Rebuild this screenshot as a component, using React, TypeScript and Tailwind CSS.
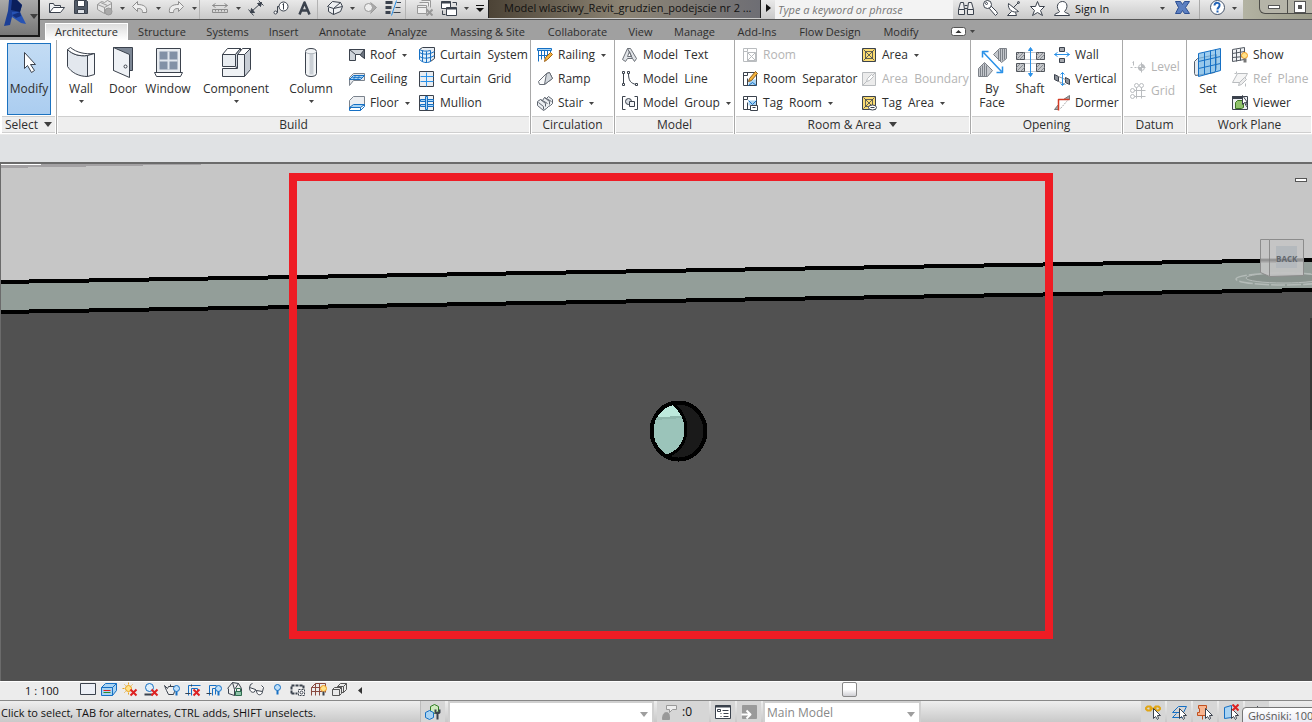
import type { ReactNode } from 'react';
import clsx from 'clsx';

const INK = '#3b424d';
const BLUE = '#1670c4';
const SKY = '#a9d3f2';
const GREY = '#b9bcbf';

type IconProps = { children: ReactNode; big?: boolean; color?: string };

function Icon({ children, big, color = INK }: IconProps) {
    return (
        <svg
            viewBox={big ? '-0.5 -0.5 32 32' : '-0.5 -0.5 16 16'}
            className={big ? 'size-8 shrink-0' : 'size-4 shrink-0'}
            fill="none"
            stroke={color}
            strokeWidth="1"
            strokeLinejoin="round"
            aria-hidden="true"
        >
            {children}
        </svg>
    );
}

function Caret({ wide }: { wide?: boolean }) {
    return wide ? (
        <svg viewBox="0 0 8 5" className="h-[5px] w-2 shrink-0" aria-hidden="true"><path d="M0 0h8L4 5z" fill="#3f3f3f" /></svg>
    ) : (
        <svg viewBox="0 0 5 3" className="h-[3px] w-[5px] shrink-0" aria-hidden="true"><path d="M0 0h5L2.500 3z" fill="#444" /></svg>
    );
}

/* Ribbon icons, 32px */
const big = {
    modify: <Icon big><path d="M11 6v16l3-3 4 7 3-2-4-6h5z" fill="#fff" /></Icon>,
    wall: <Icon big><path d="M2 3c5 5 12 7 20 6v21c-9 0-16-4-20-10z" fill="#e3e8ee" /><path d="M2 3l3-2c6 5 14 7 24 6l-7 2C14 10 7 8 2 3z" fill="#fff" /><path d="M22 9l7-2v21l-7 2z" fill="#f3f5f8" /></Icon>,
    door: <Icon big><path d="M6 1h19v23H6z" fill="#7d8795" /><path d="M6 1l16 7v23L6 24z" fill="#eef1f5" /><circle cx="18" cy="20" r="1.500" fill="#fff" /></Icon>,
    window: <Icon big><path d="M4 2h24v24H4z" fill="#e8ecf0" /><path d="M7 5h18v18H7z" fill="#8291a6" stroke="none" /><path d="M16 5v18M7 14h18" stroke="#dfe5ec" strokeWidth="2" /><path d="M2 26h28l-2 4H4z" fill="#fff" /></Icon>,
    component: <Icon big><path d="M2 8l5-6h13l-5 6z" fill="#fff" /><path d="M15 8l5-6v14l-5 6" fill="#d3d9e0" /><path d="M2 8h13v12H2z" fill="#e9edf1" /><path d="M17 8l5-6h8l-6 6z" fill="#fff" /><path d="M24 8l6-6v21l-6 7z" fill="#c7cdd5" /><path d="M17 8h7v22H2v-8h15z" fill="#eff2f5" /></Icon>,
    column: <Icon big><path d="M10 5c0-4 11-4 11 0v22c0 4-11 4-11 0z" fill="#f1f3f5" /><path d="M14 7h4v21h-4z" fill="#cbd0d6" stroke="none" /><path d="M10 5c0 3 11 3 11 0" stroke="#b0b6bd" /></Icon>,
    byFace: <Icon big color="#7c8188"><path d="M17 8l6-6h7v10l-5 4zM2 30v-8l6-6 8 8-5 6z" fill="#c5c8cd" /><path d="M22 4v10M24 2v13M26 2v12M28 2v11M4 21v9M6 19v11M8 17v13M10 19v11" /><path d="M7 6l18 19M6 11V5h6M20 26h6v-6" stroke="#2a91e8" strokeWidth="1.500" /></Icon>,
    shaft: <Icon big color="#8a8d92"><path d="M10 6h12v7H10zM10 17h12v8H10z" fill="#fff" stroke="#c5c8cc" /><path d="M2 6h8v7H2zM22 6h8v7h-8zM2 17h8v8H2zM22 17h8v8h-8z" fill="#c4c7cb" stroke="#50555c" /><path d="M3 12l6-6M5 13l5-5M2 9l3-3M23 12l6-6M25 13l5-5M22 9l3-3M3 24l6-6M6 25l4-4M2 21l4-4M23 24l6-6M26 25l4-4M22 21l4-4" /><path d="M16 2v27M14 4l2-3 2 3zM14 27l2 3 2-3z" stroke="#2a91e8" fill="#2a91e8" /></Icon>,
    set: <Icon big><path d="M2 15l3-3 19-4v14l-2 4-19 3-1-2z" fill="#e4eaf0" stroke="#56616e" /><path d="M6 7l22-5v22L6 30z" fill="#7fbce8" fillOpacity="0.75" stroke={BLUE} /><path d="M12 6v22M18 4v23M23 3v22M6 15l22-5M6 22l22-5" stroke={BLUE} /></Icon>,
};

const roomPlan = <path d="M1 1h13v13H1zM5 1v3M5 7v7M1 4h4" />;
const pencil = <path d="M6 10l1-3 6-7 2 2-6 7z" fill="#f6b43c" stroke="#8a5a1c" />;
const goldArea = <><path d="M1 1h13v13H1z" fill="#fbdc73" /><path d="M2 2l11 11M13 2L2 13M4 4h7v7H4z" strokeWidth="0.800" /></>;

/* Ribbon icons, 16px */
const small = {
    roof: <Icon><path d="M0 2h15v9l-4-4H6v6H0z" fill="#cfd4da" /><path d="M0 2l6 5M15 2l-4 5v1l4 3V2z" fill="#6d7580" /></Icon>,
    ceiling: <Icon color="#7a828c"><path d="M0 6l4-4h11v7H4l-4 5z" fill="#e4e7eb" /><path d="M0 8l4-4h11l-4 4z" fill={SKY} stroke={BLUE} /><path d="M3 6h9M6 4L4 8M10 4L8 8" stroke={BLUE} strokeWidth="0.800" /></Icon>,
    floor: <Icon color="#7a828c"><path d="M4 1h11v9H4l-4 4V5z" fill="#eceef1" /><path d="M0 12l4-3h11l-4 3z" fill={SKY} stroke={BLUE} /><path d="M0 12v3h11l4-4V9M11 12v3" stroke={BLUE} /></Icon>,
    curtainSystem: <Icon><path d="M0 2l3-2h12v11l-4 3" fill="#e7edf3" /><path d="M0 2c3 2 7 2 11 1v11c-4 2-8 1-11-2z" fill="#e4f1fb" stroke={BLUE} /><path d="M3 3v11M7 4v11M0 5c3 2 7 2 11 1M0 9c3 2 7 2 11 1M11 6l4-2M11 10l4-2" stroke={BLUE} /></Icon>,
    curtainGrid: <Icon><path d="M0 0h14v15H0z" fill="#e9edf1" /><path d="M7 1v14M1 5h13M1 10h13" stroke="#2a91e8" /></Icon>,
    mullion: <Icon><path d="M0 0h14v15H0z" fill="#eef2f5" /><path d="M6 1h2v13H6zM1 4h5v2H1zM8 4h6v2H8zM1 9h5v2H1zM8 9h6v2H8z" fill={SKY} stroke={BLUE} /></Icon>,
    railing: <Icon color={BLUE}><path d="M0 1h14v2H0z" fill={SKY} /><path d="M1 3v11M4 3v9M7 3v8M10 3v5M13 3v3M1 8h9" /><path d="M7 14l1-4 5-5 2 2-5 5z" fill="#f6b43c" stroke="#a0641a" /></Icon>,
    ramp: <Icon color="#666c75"><path d="M1 10L9 2l3-1 3 6-8 6H2z" fill="#fafbfc" /><path d="M9 2l3-1 3 6-8 6z" fill="#d3d8dd" /></Icon>,
    stair: <Icon color="#5d646e"><path d="M0 6l3-2 2 1 2-3 2 1 2-2 4 3v4l-2 2-2 1-2 2-3 2-6-5z" fill="#eceff2" /><path d="M3 4l5 4v3M5 5l5 3M7 2l5 4v3M9 3l5 3M1 7l5 4v3" /></Icon>,
    modelText: <Icon color="#6b7077"><path d="M0 12L5 1h3l6 10-2 3-2-3H5l-2 3z" fill="#e1e4e8" /><path d="M7 4L5 9h4zM5 1l5 10" fill="#fff" /></Icon>,
    modelLine: <Icon><path d="M1 2v11M6 2c0 7 2 10 8 11" /><path d="M0 0h2v2H0zM0 12h2v2H0zM5 0h2v2H5zM13 12h2v2h-2z" fill="#fff" /></Icon>,
    modelGroup: <Icon><path d="M3 1H0v13h3M12 1h3v13h-3" /><circle cx="6" cy="6" r="3" fill="#d9dde2" /><path d="M7 6h5v5H7z" fill="#f4f5f7" /></Icon>,
    room: <Icon color={GREY}>{roomPlan}<path d="M5 5h8v8H5zM5 5l8 8M13 5l-8 8" /></Icon>,
    roomSeparator: <Icon><path d="M6 8h8v6H6z" fill={SKY} stroke="none" />{roomPlan}<path d="M6 14l4-3 4 3" stroke={BLUE} />{pencil}</Icon>,
    tagRoom: <Icon><path d="M6 5h8v5H6z" fill={SKY} stroke="none" />{roomPlan}<path d="M6 5l4 4 4-4" stroke={BLUE} /><path d="M8 10h7v5H8z" fill="#fff" /><path d="M10 12h3" /></Icon>,
    area: <Icon>{goldArea}</Icon>,
    areaBoundary: <Icon color={GREY}><path d="M1 1h13v13H1zM1 14L14 1" fill="#ececec" /><path d="M5 10l1-3 4-4 2 2-4 4z" fill="#fff" /></Icon>,
    tagArea: <Icon>{goldArea}<ellipse cx="11" cy="12" rx="4" ry="2.500" fill="#fff" /><path d="M9 12h4" /></Icon>,
    openWall: <Icon><path d="M5 0h5v4H5zM5 11h5v4H5z" fill="#a4a8ae" /><path d="M0 7h15M3 5L0 7l3 2M12 5l3 2-3 2" stroke="#2a91e8" /></Icon>,
    openVertical: <Icon><path d="M0 3l4 2v5L0 8zM11 6l4 2v5l-4-2z" fill="#8d929a" /><path d="M4 5l7 3M4 10l7 3" stroke="#999" /><path d="M8 1v13M6 3l2-2 2 2M6 12l2 2 2-2" stroke="#2a91e8" /></Icon>,
    dormer: <Icon><path d="M0 14l4-5v5zM9 4l6-4v4z" fill="#a4a8ae" stroke="#777" /><path d="M4 15V4h11" stroke="#d33b24" strokeWidth="1.500" /><path d="M6 13l7-8" stroke="#aaa" strokeDasharray="2 1" /></Icon>,
    level: <Icon color={GREY}><path d="M2 3l1-1v4M0 8h2M4 8h2" /><circle cx="11" cy="8" r="3" /><path d="M7 8h8M11 3v10" /><path d="M11 8V5a3 3 0 0 1 3 3zM11 8v3a3 3 0 0 1-3-3z" fill={GREY} /></Icon>,
    grid: <Icon color={GREY}><path d="M6 4v11M11 4v11M4 7h11M4 13h11" /><circle cx="6" cy="2" r="2" /><circle cx="11" cy="2" r="2" /><circle cx="2" cy="7" r="2" /><circle cx="2" cy="13" r="2" /></Icon>,
    show: <Icon color="#535962"><path d="M0 2l12-2v12L0 14zM4 2v12M8 1v12M0 6l12-2M0 10l12-1" fill="#f1f3f5" /><circle cx="12" cy="8" r="3" fill="#ffe28a" stroke="#f29a1f" /><path d="M11 11h3v4h-3z" fill="#777" stroke="none" /></Icon>,
    refPlane: <Icon color={GREY}><path d="M5 2h10l-5 9H0z" fill="#f5f5f5" /><path d="M2 2h2M4 0v2M13 12v3" /><path d="M6 14l1-3 5-5 2 2-5 5z" fill="#ececec" /></Icon>,
    viewer: <Icon><path d="M0 1h15v13H0z" fill="#eef1f4" /><path d="M0 1h10v2H0z" fill={INK} /><path d="M3 7l2-2h6v7l-2 1H3z" fill="#8fc26b" stroke="#3c7424" /><path d="M10 0v9l2-2 2 4 1-1-2-3h2z" fill="#fff" /></Icon>,
};

const help = <Icon color="#44536b"><circle cx="8" cy="7" r="7" fill="#fff" /><path d="M5 5c0-4 6-3 5 0 0 2-2 2-2 4M8 10v2" stroke="#2263b8" strokeWidth="2" /></Icon>;

/* Quick access toolbar; each entry keeps its own slot width */
const quick: { name: string; w: string; node: ReactNode }[] = [
    { name: 'Open', w: 'w-6', node: <Icon><path d="M0 12V3h4l1 2h6v3" fill="#f0f2f4" /><path d="M0 12l4-5h11l-4 5z" fill="#fff" /></Icon> },
    { name: 'Save', w: 'w-6', node: <Icon><path d="M1 0h12l1 1v12H1z" fill="#525b68" /><path d="M4 0h7v6H4z" fill="#fff" /><path d="M4 9h7v4H4z" fill="#dfe3e8" /></Icon> },
    { name: 'Synchronize', w: 'w-6', node: <Icon color="#999"><path d="M0 4l4-3 3 1 3-2 4 2v7l-7 4-7-4zM0 4l7 3 7-4M7 7v6M3 2l7 3" fill="#e6e6e6" /><circle cx="11" cy="11" r="3.500" fill="#aaa" /></Icon> },
    { name: 'Synchronize options', w: 'w-2.5', node: <Caret /> },
    { name: 'Undo', w: 'w-[26px]', node: <Icon color="#8d8d8d"><path d="M0 6l5-5v3c6 0 10 2 9 8h-4c0-3-1-4-5-4v3z" fill="#eee" /></Icon> },
    { name: 'Undo history', w: 'w-2.5', node: <Caret /> },
    { name: 'Redo', w: 'w-[26px]', node: <Icon color="#8d8d8d"><path d="M15 6l-5-5v3C4 4 0 6 1 12h4c0-3 1-4 5-4v3z" fill="#eee" /></Icon> },
    { name: 'Redo history', w: 'w-2.5', node: <Caret /> },
    { name: '', w: 'w-2', node: null },
    { name: 'Measure', w: 'w-[26px]', node: <Icon color="#8d8d8d"><path d="M0 5h15M3 3L0 5l3 2M12 3l3 2-3 2M0 9h15v3H0zM3 9v2M6 9v2M9 9v2M12 9v2" /></Icon> },
    { name: 'Measure options', w: 'w-2.5', node: <Caret /> },
    { name: 'Aligned Dimension', w: 'w-[26px]', node: <Icon><path d="M2 12L13 2M0 9l5 6M10 0l5 5" /><path d="M2 12l1-4 3 4zM13 2L9 3l3 3z" fill={INK} /></Icon> },
    { name: 'Tag by Category', w: 'w-6', node: <Icon><path d="M1 12h3V6h2" /><circle cx="10" cy="6" r="4.500" fill="#fff" /><path d="M9 4l1-1v6" /><circle cx="2" cy="12" r="1.500" fill="#fff" /></Icon> },
    { name: 'Text', w: 'w-6', node: <Icon><path d="M2 14L7 2l5 12M4 10h6" strokeWidth="2.500" /></Icon> },
    { name: '', w: 'w-1.5', node: null },
    { name: 'Default 3D View', w: 'w-6', node: <Icon><path d="M0 6l5-5 8 1 2 4-2 5-7 3-5-3V7" fill="#eef0f2" /><path d="M0 6l6 2 9-2M6 8v6M13 2l-7 6" /></Icon> },
    { name: '3D View options', w: 'w-2.5', node: <Caret /> },
    { name: 'Section', w: 'w-6', node: <Icon color="#999"><path d="M9 2l6 5-6 6" fill="#aaa" /><circle cx="7" cy="7" r="4" fill="#eee" /></Icon> },
    { name: 'Thin Lines', w: 'w-6', node: <Icon><path d="M0 2h7M0 7h6M0 12h5" strokeWidth="3" /><path d="M11 2h5M10 7h5M8 12h7" /><path d="M11 0L6 15" stroke="#2a91e8" /></Icon> },
    { name: '', w: 'w-2', node: null },
    { name: 'Close Hidden Windows', w: 'w-6', node: <Icon color="#999"><path d="M4 0h9v7M2 2h9v4M0 5h9v8H0zM0 7h9" fill="#eee" /><path d="M9 9l6 6M15 9l-6 6" strokeWidth="2" /></Icon> },
    { name: 'Switch Windows', w: 'w-6', node: <Icon><path d="M0 1h9v7H0zM5 7h10v8H5z" fill="#fff" /><path d="M5 8h10M0 2h9" strokeWidth="2" /><path d="M11 2h4v3M1 10v4h3" /></Icon> },
    { name: 'Switch Windows options', w: 'w-2.5', node: <Caret /> },
    { name: 'Customize Quick Access Toolbar', w: 'w-[17px]', node: <svg viewBox="0 0 8 7" className="h-[7px] w-2"><path d="M0 0h8v1H0zM0 3h8L4 7z" fill="#111" /></svg> },
];

const infoTools: { name: string; node: ReactNode }[] = [
    { name: 'Search', node: <Icon><path d="M0 9l2-7h3l1 7v5H0zM15 9l-2-7h-3L9 9v5h6zM6 5h3M0 9h6M9 9h6M6 8h3" fill="#eee" /></Icon> },
    { name: 'Subscription Center', node: <Icon><path d="M6 7l7 8 2-2-1-2-6-6" fill="#fff" /><circle cx="5" cy="4" r="4" fill="#fff" /><circle cx="4" cy="3" r="1" /></Icon> },
    { name: 'Communication Center', node: <Icon><path d="M2 3c-1 6 4 10 10 8zM7 7l5-5M5 11l-4 4h9l-1-3" fill="#fff" /><circle cx="12" cy="2" r="1" /></Icon> },
    { name: 'Favorites', node: <Icon><path d="M7 1l2 5h5l-4 4 2 5-5-3-5 3 2-5-4-4h5z" fill="#fff" /></Icon> },
];

const tabs = [
    { label: 'Structure', w: 'w-[68px]' },
    { label: 'Systems', w: 'w-[63px]' },
    { label: 'Insert', w: 'w-[49px]' },
    { label: 'Annotate', w: 'w-[69px]' },
    { label: 'Analyze', w: 'w-[61px]' },
    { label: 'Massing & Site', w: 'w-[99px]' },
    { label: 'Collaborate', w: 'w-[81px]' },
    { label: 'View', w: 'w-[45px]' },
    { label: 'Manage', w: 'w-[63px]' },
    { label: 'Add-Ins', w: 'w-[62px]' },
    { label: 'Flow Design', w: 'w-[84px]' },
    { label: 'Modify', w: 'w-[58px]' },
];

function BigTool({ icon, label, w, caret }: { icon: ReactNode; label: string; w: string; caret?: boolean }) {
    return (
        <button className={clsx('flex shrink-0 flex-col items-center pt-[3px] text-xs leading-[14px]', w)}>
            {icon}
            <span className="mt-1">{label}</span>
            {caret && <span className="pt-1"><Caret /></span>}
        </button>
    );
}

function Tool({ icon, label, caret, off }: { icon: ReactNode; label: string; caret?: boolean; off?: boolean }) {
    return (
        <button disabled={off} className={clsx('flex h-6 items-center whitespace-pre text-xs', off && 'text-[#b4b4b4]')}>
            {icon}
            <span className="ml-[5px]">{label}</span>
            {caret && <span className="ml-1.5"><Caret /></span>}
        </button>
    );
}

function Panel({ title, w, caret, children }: { title: string; w: string; caret?: boolean; children: ReactNode }) {
    return (
        <section className={clsx('flex flex-col border-r border-[#a9a9a9]', w)}>
            <div className="flex h-[76px] pt-[3px]">{children}</div>
            <h2 className="mx-px flex h-[17px] items-center justify-center gap-2 border-y border-[#cfcfcf] bg-[#eee] text-xs">
                {title}
                {caret && <Caret wide />}
            </h2>
        </section>
    );
}

function Header() {
    return (
        <header className="flex h-10 items-start bg-[#a0a0a0]">
            <button aria-label="Application menu" className="flex h-[37px] w-10 shrink-0 items-start justify-between border-r-2 border-b-2 border-[#191919] bg-linear-to-b from-[#a9a9a9] to-[#777] pl-1">
                <svg viewBox="0 0 24 28" className="h-7 w-6" aria-hidden="true">
                    <path d="M5 0h8l5 5-2 7-8 5-2 8-6 1 4-15z" fill="#1c3f96" />
                    <path d="M13 0l5 5-2 7-9-2 1-10z" fill="#0a1f5c" />
                    <path d="M8 12l8 0 6 12-5-1-9-6z" fill="#2753b4" />
                    <path d="M8 15l8-3 1 4-5 2z" fill="#14307c" />
                </svg>
                <span className="pt-3.5"><Caret wide /></span>
            </button>
            <div className="min-w-0 flex-1">
                <div className="flex h-5 items-start overflow-hidden border-b border-[#555] bg-linear-to-b from-[#e9e9e9] to-[#c9c9c9] pl-[5px]">
                    {quick.map((q, i) =>
                        q.node ? (
                            <button key={i} aria-label={q.name} className={clsx('flex h-4 shrink-0 items-center justify-center', q.w)}>{q.node}</button>
                        ) : (
                            <span key={i} className={clsx('h-5 shrink-0 border-l border-[#b3b3b3]', q.w)} />
                        ),
                    )}
                    <h1 className="h-[18px] w-[273px] shrink-0 overflow-hidden whitespace-nowrap border-x border-[#222] bg-linear-to-r from-[#4c4336] via-[#8d8575] to-[#6e6e74] pl-[15px] text-[11px] leading-4 text-[#111]">
                        Model wlasciwy_Revit_grudzien_podejscie nr 2 ...
                    </h1>
                    <button aria-label="Expand search" className="flex h-4 w-3.5 shrink-0 items-center justify-center">
                        <svg viewBox="0 0 5 8" className="h-2 w-[5px]"><path d="M0 0v8l5-4z" fill="#111" /></svg>
                    </button>
                    <input aria-label="Search" placeholder="Type a keyword or phrase" className="h-[19px] w-[178px] shrink-0 bg-[#f3f3f3] px-[3px] text-[11px] italic placeholder:text-[#777]" />
                    <div className="flex gap-2 pl-[5px]">
                        {infoTools.map((t) => <button key={t.name} aria-label={t.name} className="h-4">{t.node}</button>)}
                    </div>
                    <button className="ml-2 flex h-[18px] items-center gap-[5px] text-[11px] text-[#111]">
                        <Icon><path d="M0 14c0-3 5-2 5-4C1 6 3 0 8 0s6 6 2 10c0 2 5 1 5 4z" fill="#fff" /></Icon>
                        Sign In
                    </button>
                    <div className="ml-auto flex shrink-0 items-start">
                        <button aria-label="Account options" className="flex h-4 w-[14px] items-center"><Caret /></button>
                        <button aria-label="Exchange Apps" className="h-4 w-[19px]">
                            <Icon color="#2d4f93"><path d="M1 1h5l2 3 2-3h5l-4 6 4 6h-5l-2-3-2 3H1l3-6z" fill="#5c7fc0" /></Icon>
                        </button>
                        <span className="ml-1.5 h-5 w-2.5 border-l border-[#aaa]" />
                        <button aria-label="Help" className="h-4">{help}</button>
                        <button aria-label="Help options" className="flex h-4 w-[18px] items-center justify-center"><Caret /></button>
                        <div className="flex h-[19px] w-[69px] justify-end bg-linear-to-r from-[#b3b3a3] to-[#9a9a88]">
                            <button aria-label="Minimize" className="flex h-3.5 w-[29px] items-center justify-center rounded-bl-md border border-t-0 border-[#4d4d49] bg-[#b5b4a8]">
                                <span className="h-1 w-3 border border-[#555] bg-white" />
                            </button>
                            <button aria-label="Restore" className="flex h-3.5 w-6 items-center justify-center border-b border-[#4d4d49] bg-[#b5b4a8]">
                                <span className="size-2.5 border-3 border-white bg-[#555] outline outline-[#555]" />
                            </button>
                        </div>
                    </div>
                </div>
                <nav className="flex h-5 items-end pl-[5px] text-[11px]">
                    <button className="h-[17px] w-[83px] shrink-0 border border-b-0 border-white bg-linear-to-b from-[#ddd] to-white leading-[14px]">Architecture</button>
                    {tabs.map((t) => (
                        <button key={t.label} className={clsx('h-[17px] shrink-0 whitespace-nowrap leading-[14px]', t.w)}>{t.label}</button>
                    ))}
                    <button aria-label="Minimize ribbon" className="ml-[21px] flex h-[17px] items-center gap-1">
                        <svg viewBox="0 0 15 9" className="h-[9px] w-[15px]"><rect x="0.500" y="0.500" width="14" height="8" rx="2" fill="#fff" stroke="#555" /><path d="M4.500 6h6l-3-3z" fill="#333" /></svg>
                        <Caret />
                    </button>
                </nav>
            </div>
        </header>
    );
}

function Ribbon() {
    return (
        <div className="flex h-[95px] overflow-hidden border-b border-[#e9e9e9] bg-white">
            <section className="w-[57px] shrink-0 border-r border-[#a9a9a9]">
                <div className="h-[76px] pt-[3px] pl-[7px]">
                    <button className="flex h-[72px] w-11 flex-col items-center border border-[#1b72c0] bg-linear-to-b from-[#c3dcf4] to-[#abcdf0] pt-0.5 text-xs leading-[14px]">
                        {big.modify}
                        <span className="mt-1">Modify</span>
                    </button>
                </div>
                <button className="ml-0.5 flex h-[17px] w-[53px] items-center justify-center gap-1.5 border-y border-[#cfcfcf] bg-[#eee] text-xs">
                    Select
                    <Caret wide />
                </button>
            </section>

            <Panel title="Build" w="w-[474px] shrink-0">
                <div className="w-px" />
                <BigTool icon={big.wall} label="Wall" w="w-[46px]" caret />
                <BigTool icon={big.door} label="Door" w="w-[38px]" />
                <BigTool icon={big.window} label="Window" w="w-[52px]" />
                <BigTool icon={big.component} label="Component" w="w-[84px]" caret />
                <BigTool icon={big.column} label="Column" w="w-[66px]" caret />
                <div className="w-[70px] pl-[5px]">
                    <Tool icon={small.roof} label="Roof" caret />
                    <Tool icon={small.ceiling} label="Ceiling" />
                    <Tool icon={small.floor} label="Floor" caret />
                </div>
                <div className="pl-[5px]">
                    <Tool icon={small.curtainSystem} label="Curtain  System" />
                    <Tool icon={small.curtainGrid} label="Curtain  Grid" />
                    <Tool icon={small.mullion} label="Mullion" />
                </div>
            </Panel>

            <Panel title="Circulation" w="w-[84px] shrink-0">
                <div className="pl-1.5">
                    <Tool icon={small.railing} label="Railing" caret />
                    <Tool icon={small.ramp} label="Ramp" />
                    <Tool icon={small.stair} label="Stair" caret />
                </div>
            </Panel>

            <Panel title="Model" w="w-[120px] shrink-0">
                <div className="pl-[7px]">
                    <Tool icon={small.modelText} label="Model  Text" />
                    <Tool icon={small.modelLine} label="Model  Line" />
                    <Tool icon={small.modelGroup} label="Model  Group" caret />
                </div>
            </Panel>

            <Panel title="Room & Area" w="w-[236px] shrink-0" caret>
                <div className="w-[126px] pl-[7px]">
                    <Tool icon={small.room} label="Room" off />
                    <Tool icon={small.roomSeparator} label="Room  Separator" />
                    <Tool icon={small.tagRoom} label="Tag  Room" caret />
                </div>
                <div>
                    <Tool icon={small.area} label="Area" caret />
                    <Tool icon={small.areaBoundary} label="Area  Boundary" off />
                    <Tool icon={small.tagArea} label="Tag  Area" caret />
                </div>
            </Panel>

            <Panel title="Opening" w="w-[152px] shrink-0">
                <div className="w-0.5" />
                <BigTool icon={big.byFace} label="By Face" w="w-[38px]" />
                <BigTool icon={big.shaft} label="Shaft" w="w-[38px]" />
                <div className="pl-[5px]">
                    <Tool icon={small.openWall} label="Wall" />
                    <Tool icon={small.openVertical} label="Vertical" />
                    <Tool icon={small.dormer} label="Dormer" />
                </div>
            </Panel>

            <Panel title="Datum" w="w-[64px] shrink-0">
                <div className="pt-3 pl-[7px]">
                    <Tool icon={small.level} label="Level" off />
                    <Tool icon={small.grid} label="Grid" off />
                </div>
            </Panel>

            <Panel title="Work Plane" w="min-w-[126px] flex-1">
                <BigTool icon={big.set} label="Set" w="w-[42px]" />
                <div className="pl-[3px]">
                    <Tool icon={small.show} label="Show" />
                    <Tool icon={small.refPlane} label="Ref  Plane" off />
                    <Tool icon={small.viewer} label="Viewer" />
                </div>
            </Panel>
        </div>
    );
}

function ModelView() {
    return (
        <main className="min-h-0 flex-1 border-t-2 border-l border-[#6b6b6b] bg-[#515151]">
            <svg viewBox="1 164 1311 517" preserveAspectRatio="xMidYMid slice" className="block size-full" role="img" aria-label="3D view of the model">
                <g shapeRendering="crispEdges">
                    <path d="M0 164h1312v96L0 282z" fill="#c6c6c6" />
                    <path d="M0 164h230L0 168z" fill="#a3a1a3" />
                    <path d="M0 164h41v1H0z" fill="#fff" />
                    <path d="M0 282l1312-22v30L0 312z" fill="#939e99" />
                    <path d="M0 312l1312-22v391H0z" fill="#515151" />
                    <path d="M0 282l1312-22M0 312l1312-22" stroke="#000" strokeWidth="4" />
                    <ellipse cx="678.500" cy="431" rx="27" ry="28.500" fill="#1a1a1a" />
                    <path d="M666 456c12-3 20-13 20-27 0-11-6-20-14-26-12 4-20 15-20 29 0 11 5 20 14 24z" fill="#9bc4ba" />
                    <path d="M656 417c3-7 9-12 16-14 6 4 10 8 12 14z" fill="#bde9dc" />
                    <path d="M656 417l27-1v2l-28 2z" fill="#8fb8ad" />
                    <path d="M666 456c12-3 20-13 20-27 0-11-6-20-14-26" fill="none" stroke="#000" strokeWidth="3" />
                    <ellipse cx="678.500" cy="431" rx="27" ry="28.500" fill="none" stroke="#000" strokeWidth="4" />
                    <path d="M1310 318h2v112h-2z" fill="#383838" />
                    <path d="M1295.500 178.500h11v3h-11z" fill="#fff" stroke="#555" />
                    <rect x="293" y="177" width="756" height="458" fill="none" stroke="#ee1c24" strokeWidth="8" />
                </g>
                {/* View cube and compass ring */}
                <ellipse cx="1284" cy="279" rx="48" ry="6" fill="none" stroke="#b4bbb8" strokeWidth="1.500" strokeDasharray="14 2" />
                <ellipse cx="1284" cy="278" rx="38" ry="5" fill="#7d8582" fillOpacity="0.500" stroke="#b5bbb9" />
                <path d="M1260.500 239.500h9v37l-9-4z" fill="#c4c4c4" fillOpacity="0.900" stroke="#8c8c8c" />
                <path d="M1269.500 239.500h34v36l-34 1z" fill="#c4c4c4" fillOpacity="0.900" stroke="#8c8c8c" />
                <path d="M1276 246h21v22h-21z" fill="#b4b9bd" />
                <path d="M1260 260h43" stroke="#777" strokeWidth="3" strokeOpacity="0.500" />
                <text x="1276" y="262" fontSize="8" fontWeight="700" fill="#62676e">BACK</text>
            </svg>
        </main>
    );
}

const redX = <path d="M8 7l6 6M14 7l-6 6" stroke="#d22" strokeWidth="2" />;
const bulb = <><circle cx="12" cy="6" r="3" fill="#bfe0fa" stroke={BLUE} /><path d="M12 9v4" stroke={BLUE} strokeWidth="2" /></>;

const viewTools: { name: string; node: ReactNode }[] = [
    { name: 'Detail Level', node: <Icon><path d="M0 1h15v11H0z" fill="#eceff5" /></Icon> },
    { name: 'Visual Style', node: <Icon color={BLUE}><path d="M0 5l4-4h11v7l-4 5H0zM0 5h11v8M11 5l4-4" fill={SKY} /><path d="M2 8h7" stroke="#d22" /><path d="M2 10h7" stroke="#2a8a2a" /></Icon> },
    { name: 'Sun Path', node: <Icon color="#e9a31b"><circle cx="6" cy="6" r="3" fill="#ffe28a" /><path d="M6 0v2M6 10v2M0 6h2M2 2l1 1M10 2L9 3M2 10l1-1" />{redX}</Icon> },
    { name: 'Shadows', node: <Icon color={BLUE}><path d="M1 12h8" stroke={INK} strokeWidth="2" /><circle cx="6" cy="5" r="4" fill="#e0f0fb" />{redX}</Icon> },
    { name: 'Rendering', node: <Icon><path d="M0 3l3 3 1-2h6v5l-1 3H4L2 8zM6 2v2" fill="#eee" />{bulb}</Icon> },
    { name: 'Crop View', node: <Icon><path d="M3 13V3h12M0 11h1M6 6h6v6M6 6v7" stroke={BLUE} /><path d="M0 11h5M6 2v2" />{redX}</Icon> },
    { name: 'Crop Region', node: <Icon><path d="M3 13V3h7M6 6h3v6M6 6v7" stroke={BLUE} /><path d="M0 11h5" />{bulb}</Icon> },
    { name: 'Locked 3D View', node: <Icon><path d="M0 6l5-6 6 1 3 5v3l-7 4-6-2V6M5 0l2 7v6M11 1L7 7" fill="#eee" /><path d="M8 9h6v4H8z" fill="#8fc2a9" stroke="#2f6d4e" /><path d="M9 9V6h4v3" stroke="#2f6d4e" /></Icon> },
    { name: 'Temporary Hide', node: <Icon><path d="M1 5c0 6 6 6 6 2M8 8c0 6 6 5 6 1M7 7l1 1M1 5l1-3 2-1M14 9l1-4-2-2M1 5l6 2M8 8l6 1" fill="#fff" /></Icon> },
    { name: 'Reveal Hidden', node: <Icon color={BLUE}><circle cx="8" cy="5" r="3" fill="#bfe0fa" /><path d="M8 8v4" strokeWidth="2" /></Icon> },
    { name: 'View Properties', node: <Icon><path d="M1 11V3h12v3M1 11h6" strokeWidth="2" strokeDasharray="3 1" /><path d="M8 7h6v6H8z" fill="#fff" strokeDasharray="2 1" /><circle cx="11" cy="10" r="1.500" /></Icon> },
    { name: 'Analytical Model', node: <Icon><path d="M0 5l4-4h10v9M0 5v8M4 1v12M8 1v12M0 5h10M0 9h11" stroke="#8a4a40" /><circle cx="12" cy="6" r="3" fill="#ffe28a" stroke="#f29a1f" /><path d="M12 9v4" strokeWidth="2" /></Icon> },
    { name: 'Displacement Sets', node: <Icon color="#555"><path d="M5 4l3-3h6v6l-3 3H5zM5 4h6v6M11 4l3-3" fill="#e9e9e9" /><path d="M0 7l2-2h7v6l-2 2H0zM0 7h7v6M7 7l2-2" fill="#e9e9e9" /></Icon> },
];

function ViewBar() {
    return (
        <div className="flex h-[19px] shrink-0 items-start border-t border-white bg-[#ececec] text-[11px]">
            <button className="h-[17px] w-[77px] pl-[25px] text-left leading-4 text-[#111]">1 : 100</button>
            {viewTools.map((t) => (
                <button key={t.name} aria-label={t.name} className="flex w-[21px] shrink-0 justify-center">{t.node}</button>
            ))}
            <button aria-label="Scroll left" className="flex h-4 w-5 items-center justify-center">
                <svg viewBox="0 0 4 7" className="h-[7px] w-1"><path d="M4 0v7L0 3.500z" fill="#333" /></svg>
            </button>
            <div className="flex h-4 flex-1 justify-center pl-4">
                <button aria-label="Scroll horizontally" className="size-[15px] rounded-xs border border-[#888] bg-linear-to-b from-white from-50% to-[#cfcfd4]" />
            </div>
        </div>
    );
}

const pointer = <path d="M8 4v10l2-2 2 3 1-1-1-3h3z" fill="#fff" />;

const selectTools: { name: string; node: ReactNode }[] = [
    { name: 'Select Links', node: <Icon><path d="M2 2h3l1 2-1 2H2L0 4zM10 2h3l2 2-2 2h-3L9 4zM4 4h7" stroke="#e0a516" strokeWidth="2" />{pointer}</Icon> },
    { name: 'Select Underlay Elements', node: <Icon><path d="M1 8l6-6h8M1 8h11l3-6M1 13l4-4M1 13h11" stroke={BLUE} />{pointer}</Icon> },
    { name: 'Select Pinned Elements', node: <Icon><path d="M1 1h8v3H8v4h2v3H0V8h2V4H1zM5 11v4" fill="#f8b590" stroke="#c2501f" />{pointer}</Icon> },
    { name: 'Select Elements by Face', node: <Icon><path d="M1 3l7-2v12l-7 1z" fill={SKY} stroke={BLUE} />{pointer}<path d="M9 0l6 6M15 0L9 6" stroke="#d22" strokeWidth="2" /></Icon> },
    { name: 'Drag Elements on Selection', node: <Icon><path d="M8 2v12M5 5l3-3 3 3" /></Icon> },
];

function StatusBar() {
    const box = 'flex h-[21px] shrink-0 items-center justify-center bg-[#d6d6d6]';
    return (
        <footer className="relative flex h-[22px] shrink-0 items-start overflow-hidden border-t border-[#888] bg-linear-to-b from-[#eee] to-[#c9c9c9] text-[11px] text-[#111]">
            <p className="h-[21px] w-[421px] shrink-0 whitespace-nowrap border-r border-[#bbb] pl-px leading-6">
                Click to select, TAB for alternates, CTRL adds, SHIFT unselects.
            </p>
            <button aria-label="Worksets" className={clsx(box, 'w-6')}>
                <Icon><path d="M5 2l4-2 4 2v5l-4 2-4-2z" fill="#cfeabf" stroke="#2f7d22" /><path d="M0 8l4-2 4 2v5l-4 2-4-2z" fill={SKY} stroke={BLUE} /><path d="M12 15V9M10 5v3l2 1 2-1V5" strokeWidth="2" /></Icon>
            </button>
            <div className="ml-[3px] grid h-[21px] w-[206px] shrink-0 grid-cols-[1fr_12px] items-center border-2 border-b-0 border-[#d0d0d0] bg-white">
                <select aria-label="Active workset" className="col-span-2 col-start-1 row-start-1 h-full appearance-none" />
                <span className="pointer-events-none col-start-2 row-start-1 pt-1 opacity-50"><Caret wide /></span>
            </div>
            <button aria-label="Editing requests" className={clsx(box, 'ml-[3px] w-[52px] gap-1 pr-3 text-xs')}>
                <Icon color="#999"><path d="M4 1h10v4h-4L7 8V5H4z" fill="#eee" /><path d="M0 15c0-4 1-7 4-7s3 3 3 7z" fill="#999" /></Icon>
                :0
            </button>
            <button aria-label="Design options" className={clsx(box, 'ml-0.5 w-6')}>
                <Icon><path d="M0 1h15v13H0z" fill="#fff" /><path d="M0 2h15" strokeWidth="2" /><path d="M2 5h3v2H2zM7 6h6M5 9h1M8 9h5M5 12h1M8 12h5" /></Icon>
            </button>
            <button aria-label="Add to set" className={clsx(box, 'ml-0.5 w-6')}>
                <Icon color="#9a9a9a"><path d="M1 1h14v13H1z" fill="#9a9a9a" /><path d="M0 10h8M5 6l4 4-4 4" stroke="#fff" strokeWidth="2" /></Icon>
            </button>
            <div className="ml-0.5 grid h-[21px] w-[158px] shrink-0 grid-cols-[1fr_12px] items-center border-2 border-b-0 border-[#d0d0d0] bg-white">
                <select aria-label="Design option" className="col-span-2 col-start-1 row-start-1 h-full appearance-none pl-0.5 text-xs text-[#888]">
                    <option>Main Model</option>
                </select>
                <span className="pointer-events-none col-start-2 row-start-1 pt-1 opacity-50"><Caret wide /></span>
            </div>
            <div className="ml-auto flex gap-0.5 pr-[43px]">
                {selectTools.map((t) => <button key={t.name} aria-label={t.name} className={clsx(box, 'w-6')}>{t.node}</button>)}
            </div>
            {/* Volume tooltip hanging over the corner of the bar */}
            <div role="tooltip" className="absolute top-1.5 left-[calc(100%-70px)] h-5 w-24 whitespace-nowrap rounded-sm border border-[#767676] bg-linear-to-b from-white to-[#e4e5f0] pl-[5px] text-[11px] leading-4 text-[#575757]">
                Głośniki: 100%
            </div>
        </footer>
    );
}

export default function App() {
    return (
        <div className="flex h-screen flex-col overflow-hidden bg-[#e0e2e4] font-['Open_Sans','Noto_Sans',sans-serif] text-[#2e2e2e]">
            <Header />
            <Ribbon />
            <div className="h-[27px] shrink-0" />
            <ModelView />
            <ViewBar />
            <StatusBar />
        </div>
    );
}
